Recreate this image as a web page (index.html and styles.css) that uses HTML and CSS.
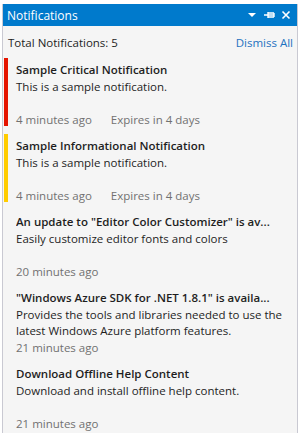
FILE: index.html
```html
<!DOCTYPE html>
<html>
<head>
  <meta charset="utf-8">
  <title>Notifications</title>
  <link rel="stylesheet" href="styles.css">
</head>
<body>
<div class=win>
  <div class=bar>
    <span class=title>Notifications</span>
    <span class=grip></span>
    <svg class=ico width="10" height="10" viewBox="0 0 10 10"><path d="M1 3h8L5 7z" fill="#fff"/></svg>
    <svg class=ico width="12" height="10" viewBox="0 0 12 10"><path d="M1 5h4M5 2v6M5 3h6M5 7h6M11 3v4M5 5h6" stroke="#fff" stroke-width="1.4" fill="none"/></svg>
    <svg class=ico width="10" height="10" viewBox="0 0 10 10"><path d="M1.5 1.5l7 7M8.5 1.5l-7 7" stroke="#fff" stroke-width="1.6"/></svg>
  </div>
  <div class=head>
    <span>Total Notifications: 5</span>
    <a href="#">Dismiss All</a>
  </div>
  <div class="card red">
    <b>Sample Critical Notification</b>
    <p>This is a sample notification.</p>
    <p>&nbsp;</p>
    <div class=meta><span>4 minutes ago</span><span>Expires in 4 days</span></div>
  </div>
  <div class="card yellow">
    <b>Sample Informational Notification</b>
    <p>This is a sample notification.</p>
    <p>&nbsp;</p>
    <div class=meta><span>4 minutes ago</span><span>Expires in 4 days</span></div>
  </div>
  <div class=card>
    <b>An update to "Editor Color Customizer" is av...</b>
    <p>Easily customize editor fonts and colors</p>
    <p>&nbsp;</p>
    <div class=meta><span>20 minutes ago</span></div>
  </div>
  <div class=card>
    <b>"Windows Azure SDK for .NET 1.8.1" is availa...</b>
    <p>Provides the tools and libraries needed to use the latest Windows Azure platform features.</p>
    <div class=meta><span>21 minutes ago</span></div>
  </div>
  <div class=card>
    <b>Download Offline Help Content</b>
    <p>Download and install offline help content.</p>
    <p>&nbsp;</p>
    <div class=meta><span>21 minutes ago</span></div>
  </div>
</div>
</body>
</html>
```
FILE: styles.css
```css
body {margin:0; background:#fff; font-family:"Open Sans", sans-serif; font-size:11.5px; color:#1e1e1e;}
.win {margin:4px 4px 0 2px; background:#f5f5f5; border-left:1px solid #c9c9d2; border-right:1px solid #c9c9d2; height:429px; overflow:hidden;}
.bar {display:flex; align-items:center; height:22px; background:#007acc; color:#fff; padding:0 6px 0 4px; gap:6px;}
.title {font-size:12px;}
.grip {flex:1; height:5px; margin:0 6px; background-image:radial-gradient(circle, #5aa8dd 0.6px, transparent 0.7px); background-size:2px 2px;}
.ico {display:block;}
.head {display:flex; justify-content:space-between; align-items:center; height:32px; padding:0 4px 0 5px;}
.head a {color:#1e72c0; text-decoration:none;}
.card {margin:0 0 8px 1px; padding:4px 8px 0 8px; height:64px; border-left:4px solid transparent;}
.card.red {border-left-color:#e51400;}
.card.yellow {border-left-color:#ffcc00;}
.card b, .card p {display:block; margin:0; line-height:16.5px;}
.card b {font-weight:600; white-space:nowrap; overflow:hidden;}
.meta {display:flex; gap:19px; color:#717171; line-height:16.5px;}
```
